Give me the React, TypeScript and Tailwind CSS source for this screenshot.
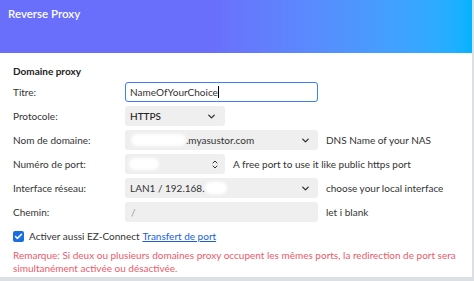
import { ChevronDown, ChevronUp, Check } from "lucide-react";

function Chevron() {
  return <ChevronDown className="w-[11px] h-[11px] text-[#333]" strokeWidth={3} />;
}

function Blob({ w }: { w: string }) {
  return <span className={`inline-block h-[12px] rounded-full bg-white blur-[1.5px] ${w}`}></span>;
}

export default function App() {
  const rows = [
    { label: "Titre:" },
    { label: "Protocole:" },
    { label: "Nom de domaine:" },
    { label: "Numéro de port:" },
    { label: "Interface réseau:" },
    { label: "Chemin:" },
  ];

  return (
    <div className="w-[474px] h-[281px] bg-[#dcdfe3] overflow-hidden font-['Lato','Noto_Sans',sans-serif] text-[10px] text-[#333]">
      <div className="w-[472px] h-[277px] bg-white flex flex-col">
        {/* Header */}
        <div className="h-[53px] bg-linear-to-r from-[#6a6ffb] from-45% to-[#00b4ff] px-[8px] pt-[5px]">
          <div className="text-white text-[11.5px] font-semibold">Reverse Proxy</div>
        </div>

        <div className="px-[13px] pt-[11px] flex flex-col">
          <div className="h-[14px] mb-[4px] flex items-center font-bold text-[#222]">Domaine proxy</div>

          <div className="flex flex-col gap-[4px]">
            {/* Titre */}
            <div className="flex items-center h-[20px]">
              <div className="w-[112px]">{rows[0].label}</div>
              <div className="w-[193px] h-[20px] border-[1.5px] border-[#3b82f6] rounded-[3px] flex items-center px-[4px]">
                NameOfYourChoice<span className="w-px h-[12px] bg-black"></span>
              </div>
            </div>

            {/* Protocole */}
            <div className="flex items-center h-[20px]">
              <div className="w-[112px]">{rows[1].label}</div>
              <div className="w-[100px] h-[20px] bg-[#efefef] rounded-[3px] flex items-center justify-between px-[5px] pr-[8px]">
                <span className="font-medium text-[#222]">HTTPS</span>
                <Chevron />
              </div>
            </div>

            {/* Nom de domaine */}
            <div className="flex items-center h-[20px]">
              <div className="w-[112px]">{rows[2].label}</div>
              <div className="w-[193px] h-[20px] bg-[#efefef] rounded-[3px] flex items-center justify-between pl-[6px] pr-[7px]">
                <span className="flex items-center">
                  <Blob w="w-[55px]" />
                  <span>.myasustor.com</span>
                </span>
                <Chevron />
              </div>
              <div className="ml-[8px]">DNS Name of your NAS</div>
            </div>

            {/* Port */}
            <div className="flex items-center h-[20px]">
              <div className="w-[112px]">{rows[3].label}</div>
              <div className="w-[100px] h-[20px] bg-[#efefef] rounded-[3px] flex items-center justify-between pl-[4px] pr-[6px]">
                <Blob w="w-[30px]" />
                <span className="flex flex-col items-center -space-y-[3px]">
                  <ChevronUp className="w-[8px] h-[8px]" strokeWidth={3} />
                  <ChevronDown className="w-[8px] h-[8px]" strokeWidth={3} />
                </span>
              </div>
              <div className="ml-[8px]">A free port to use it like public https port</div>
            </div>

            {/* Interface */}
            <div className="flex items-center h-[20px]">
              <div className="w-[112px]">{rows[4].label}</div>
              <div className="w-[193px] h-[20px] bg-[#efefef] rounded-[3px] flex items-center justify-between pl-[5px] pr-[7px]">
                <span className="flex items-center">
                  <span>LAN1 / 192.168.</span>
                  <Blob w="w-[22px]" />
                </span>
                <Chevron />
              </div>
              <div className="ml-[8px]">choose your local interface</div>
            </div>

            {/* Chemin */}
            <div className="flex items-center h-[20px]">
              <div className="w-[112px]">{rows[5].label}</div>
              <div className="w-[193px] h-[20px] bg-[#efefef] rounded-[3px] flex items-center px-[6px] text-[#999]">
                /
              </div>
              <div className="ml-[8px]">let i blank</div>
            </div>
          </div>

          {/* Checkbox */}
          <div className="flex items-center h-[12px] mt-[8px]">
            <span className="w-[11px] h-[11px] rounded-[2px] bg-[#1a6fe0] flex items-center justify-center">
              <Check className="w-[9px] h-[9px] text-white" strokeWidth={4} />
            </span>
            <span className="ml-[5px]">Activer aussi EZ-Connect</span>
            <span className="ml-[3px] text-[#1a5fd6] underline">Transfert de port</span>
          </div>

          <div className="mt-[7px] text-[#ec5a6a] leading-[12.5px]">
            Remarque: Si deux ou plusieurs domaines proxy occupent les mêmes ports, la redirection de port sera simultanément activée ou désactivée.
          </div>
        </div>
      </div>
    </div>
  );
}
